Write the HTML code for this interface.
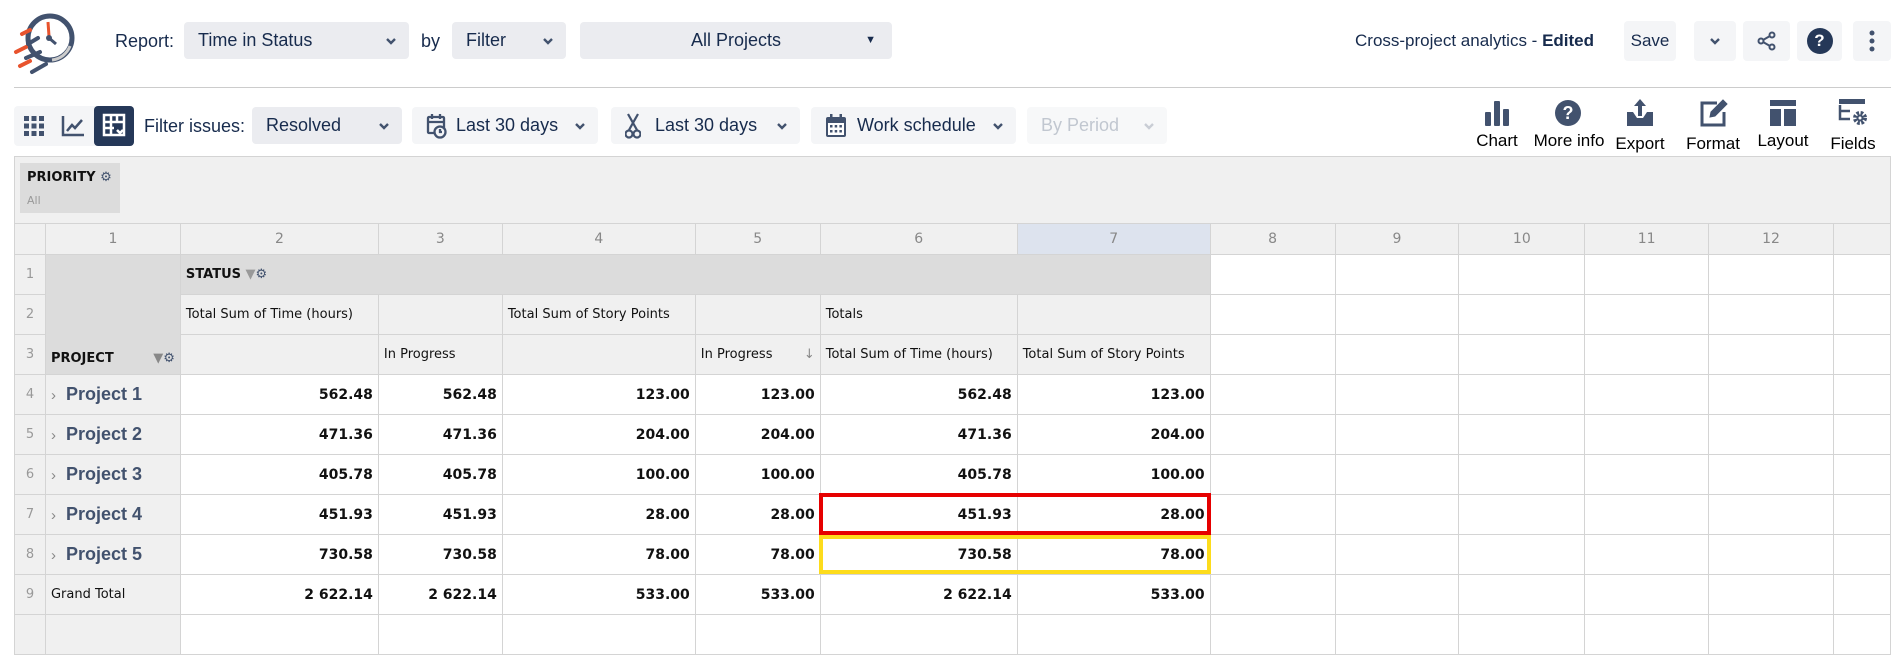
<!DOCTYPE html>
<html><head><meta charset="utf-8"><style>
*{box-sizing:border-box;margin:0;padding:0}
body{width:1891px;height:617px;overflow:hidden;background:#fff;font-family:"Liberation Sans",sans-serif;color:#172b4d;position:relative}
.a{position:absolute}
.sel{position:absolute;background:#ebecf0;border-radius:4px;font-size:18px;display:flex;align-items:center;padding:0 14px;color:#172b4d}
.sel .v{position:absolute;right:12px;top:50%;transform:translateY(-50%);width:12px;height:8px}
.btn{position:absolute;background:#f4f5f7;border-radius:4px;display:flex;align-items:center;justify-content:center}
.ti{position:absolute;text-align:center;font-size:17px;color:#000;width:70px}
table{position:absolute;left:14px;top:223px;border-collapse:collapse;table-layout:fixed;font-family:"DejaVu Sans",sans-serif;font-size:13px;color:#111}
td{border:1px solid #d4d4d4;overflow:hidden;white-space:nowrap;padding:0 5px}
tr.h td{height:31px;background:#f0f0f0;color:#888;text-align:center;font-size:14px}
tr.r td{height:40px}
td.n{background:#f0f0f0;color:#999;text-align:center;padding:0}
td.num{text-align:right;font-weight:bold;font-size:14px}
td.p{background:#f0f0f0;font-family:"Liberation Sans",sans-serif;font-weight:bold;font-size:18px;color:#42526e}
td.p span{color:#888;font-weight:normal;font-size:15px;margin:0 10px 0 0}
td.g{background:#f0f0f0}
td.dg{background:#dcdcdc}
</style></head><body>
<svg width="0" height="0" style="position:absolute"><defs><symbol id="cv" viewBox="0 0 12 8"><path d="M2 2L6 6L10 2" fill="none" stroke="#42526e" stroke-width="2.4"/></symbol></defs></svg>
<!-- logo -->
<svg class="a" style="left:8px;top:8px" width="70" height="70" viewBox="0 0 70 70">
<circle cx="42" cy="30" r="22" fill="none" stroke="#42526e" stroke-width="5"/>
<path d="M44 52 A22 22 0 0 0 62 38" stroke="#ccc" stroke-width="3" fill="none"/>
<line x1="40" y1="14" x2="41" y2="28" stroke="#e8532d" stroke-width="3"/>
<line x1="41" y1="30" x2="48" y2="36" stroke="#42526e" stroke-width="3"/>
<circle cx="41" cy="30" r="3" fill="#42526e"/>
<line x1="14" y1="26" x2="22" y2="22" stroke="#e8532d" stroke-width="4" stroke-linecap="round"/>
<line x1="8" y1="44" x2="18" y2="39" stroke="#e8532d" stroke-width="4" stroke-linecap="round"/>
<line x1="12" y1="58" x2="22" y2="53" stroke="#e8532d" stroke-width="4" stroke-linecap="round"/>
<line x1="20" y1="36" x2="30" y2="30" stroke="#42526e" stroke-width="4" stroke-linecap="round"/>
<line x1="18" y1="50" x2="32" y2="44" stroke="#42526e" stroke-width="4" stroke-linecap="round"/>
<line x1="24" y1="64" x2="38" y2="56" stroke="#42526e" stroke-width="4" stroke-linecap="round"/>
</svg>
<div class="a" style="left:115px;top:31px;font-size:18px">Report:</div>
<div class="sel" style="left:184px;top:22px;width:225px;height:37px">Time in Status<svg class="v"><use href="#cv"/></svg></div>
<div class="a" style="left:421px;top:31px;font-size:18px">by</div>
<div class="sel" style="left:452px;top:22px;width:114px;height:37px">Filter<svg class="v"><use href="#cv"/></svg></div>
<div class="sel" style="left:580px;top:22px;width:312px;height:37px;justify-content:center">All Projects<span style="position:absolute;right:16px;font-size:11px;top:12px">&#9660;</span></div>
<div class="a" style="left:1355px;top:31px;font-size:17px">Cross-project analytics - <b>Edited</b></div>
<div class="btn" style="left:1624px;top:21px;width:52px;height:40px;font-size:17px">Save</div>
<div class="btn" style="left:1694px;top:21px;width:42px;height:40px"><svg width="12" height="8"><use href="#cv"/></svg></div>
<div class="btn" style="left:1743px;top:21px;width:47px;height:40px"><svg width="20" height="20" viewBox="0 0 20 20"><circle cx="15" cy="4" r="2.5" fill="none" stroke="#42526e" stroke-width="2"/><circle cx="4" cy="10" r="2.5" fill="none" stroke="#42526e" stroke-width="2"/><circle cx="15" cy="16" r="2.5" fill="none" stroke="#42526e" stroke-width="2"/><path d="M6 9L13 5M6 11L13 15" stroke="#42526e" stroke-width="2"/></svg></div>
<div class="btn" style="left:1797px;top:21px;width:45px;height:40px"><div style="width:26px;height:26px;border-radius:50%;background:#253858;color:#fff;font-weight:bold;font-size:17px;text-align:center;line-height:26px">?</div></div>
<div class="btn" style="left:1853px;top:21px;width:38px;height:40px"><svg width="6" height="22" viewBox="0 0 6 22" fill="#42526e"><circle cx="3" cy="3" r="2.5"/><circle cx="3" cy="11" r="2.5"/><circle cx="3" cy="19" r="2.5"/></svg></div>
<div class="a" style="left:14px;top:87px;width:1877px;height:1px;background:#ccc"></div>
<!-- toolbar -->
<div class="a" style="left:14px;top:106px;width:120px;height:40px;background:#f4f5f7;border-radius:4px"></div>
<svg class="a" style="left:23px;top:115px" width="22" height="22" viewBox="0 0 22 22" fill="#42526e"><rect x="1" y="1" width="5" height="5"/><rect x="8.5" y="1" width="5" height="5"/><rect x="16" y="1" width="5" height="5"/><rect x="1" y="8.5" width="5" height="5"/><rect x="8.5" y="8.5" width="5" height="5"/><rect x="16" y="8.5" width="5" height="5"/><rect x="1" y="16" width="5" height="5"/><rect x="8.5" y="16" width="5" height="5"/><rect x="16" y="16" width="5" height="5"/></svg>
<svg class="a" style="left:61px;top:115px" width="24" height="22" viewBox="0 0 24 22" fill="none" stroke="#42526e" stroke-width="2.5"><path d="M2 1V20H23"/><path d="M6 16L11 10L14 13L21 5"/></svg>
<div class="a" style="left:94px;top:106px;width:40px;height:40px;background:#253858;border-radius:4px"></div>
<svg class="a" style="left:102px;top:113px" width="24" height="26" viewBox="0 0 24 26" fill="none" stroke="#fff" stroke-width="2.5"><rect x="2" y="2" width="20" height="20"/><path d="M2 9H22M2 15H12M9 2V22M15 2V9"/><path d="M15 17L18 20L21 17" /></svg>
<div class="a" style="left:144px;top:116px;font-size:18px">Filter issues:</div>
<div class="sel" style="left:252px;top:107px;width:150px;height:37px">Resolved<svg class="v"><use href="#cv"/></svg></div>
<div class="sel" style="left:412px;top:107px;width:186px;height:37px;background:#f4f5f7"><svg width="22" height="26" viewBox="0 0 22 26" fill="none" stroke="#42526e" stroke-width="2.3" style="margin-right:8px"><rect x="2" y="4" width="16" height="16" rx="1"/><path d="M6 1V6M14 1V6M2 9H18"/><circle cx="14" cy="19" r="5.5" fill="#f4f5f7"/><path d="M14 16V19H16"/></svg>Last 30 days<svg class="v"><use href="#cv"/></svg></div>
<div class="sel" style="left:611px;top:107px;width:189px;height:37px;background:#f4f5f7"><svg width="16" height="26" viewBox="0 0 16 26" fill="none" stroke="#42526e" stroke-width="2.2" style="margin-right:14px"><path d="M3 1L12 17M13 1L4 17"/><circle cx="4" cy="21" r="3.5"/><circle cx="12" cy="21" r="3.5"/></svg>Last 30 days<svg class="v"><use href="#cv"/></svg></div>
<div class="sel" style="left:811px;top:107px;width:205px;height:37px;background:#f4f5f7"><svg width="22" height="24" viewBox="0 0 22 24" style="margin-right:10px"><rect x="1" y="3" width="20" height="20" rx="2" fill="#42526e"/><rect x="3" y="9" width="16" height="12" fill="#fff"/><g fill="#42526e"><rect x="5" y="11" width="2.5" height="2.5"/><rect x="9.7" y="11" width="2.5" height="2.5"/><rect x="14.4" y="11" width="2.5" height="2.5"/><rect x="5" y="16" width="2.5" height="2.5"/><rect x="9.7" y="16" width="2.5" height="2.5"/><rect x="14.4" y="16" width="2.5" height="2.5"/></g><rect x="5" y="0" width="2.5" height="5" fill="#42526e"/><rect x="14.5" y="0" width="2.5" height="5" fill="#42526e"/></svg>Work schedule<svg class="v"><use href="#cv"/></svg></div>
<div class="sel" style="left:1027px;top:107px;width:140px;height:37px;background:#f7f8f9;color:#c1c7d0">By Period<svg class="v" style="opacity:.25"><use href="#cv"/></svg></div>
<!-- right icons -->
<svg class="a" style="left:1483px;top:99px" width="28" height="28" viewBox="0 0 28 28" fill="#42526e"><rect x="2" y="13" width="6" height="14" rx="1"/><rect x="11" y="2" width="6" height="25" rx="1"/><rect x="20" y="10" width="6" height="17" rx="1"/></svg>
<div class="ti" style="left:1462px;top:131px">Chart</div>
<svg class="a" style="left:1554px;top:99px" width="28" height="28" viewBox="0 0 28 28"><circle cx="14" cy="14" r="13" fill="#42526e"/><text x="14" y="20" text-anchor="middle" fill="#fff" font-size="18" font-weight="bold" font-family="Liberation Sans">?</text></svg>
<div class="ti" style="left:1530px;top:131px;width:78px">More info</div>
<svg class="a" style="left:1625px;top:98px" width="30" height="30" viewBox="0 0 30 30" fill="#42526e"><path d="M15 1L9 8H13V18H17V8H21Z"/><path d="M2 14H8L12 20H18L22 14H28V28H2Z"/></svg>
<div class="ti" style="left:1605px;top:134px">Export</div>
<svg class="a" style="left:1699px;top:98px" width="30" height="30" viewBox="0 0 30 30" fill="none" stroke="#42526e" stroke-width="3"><path d="M18 5H3V27H25V14"/><path d="M24 2L28 6L16 18L11 19L12 14Z" fill="#42526e" stroke-width="1"/></svg>
<div class="ti" style="left:1678px;top:134px">Format</div>
<svg class="a" style="left:1769px;top:99px" width="28" height="28" viewBox="0 0 28 28" fill="#42526e"><rect x="1" y="1" width="26" height="6"/><rect x="1" y="10" width="11" height="17"/><rect x="15" y="10" width="12" height="17"/></svg>
<div class="ti" style="left:1748px;top:131px">Layout</div>
<svg class="a" style="left:1838px;top:97px" width="30" height="30" viewBox="0 0 30 30"><rect x="1" y="2" width="26" height="5" fill="#42526e"/><path d="M2 8V22H12M2 14H12" fill="none" stroke="#42526e" stroke-width="2.5"/><circle cx="22" cy="21" r="5" fill="none" stroke="#42526e" stroke-width="4" stroke-dasharray="2.5 1.5"/><circle cx="22" cy="21" r="3.5" fill="#42526e"/><circle cx="22" cy="21" r="1.5" fill="#fff"/></svg>
<div class="ti" style="left:1818px;top:134px">Fields</div>
<!-- priority area -->
<div class="a" style="left:14px;top:156px;width:1877px;height:68px;background:#f0f0f0;border:1px solid #d4d4d4"></div>
<div class="a" style="left:20px;top:163px;width:100px;height:50px;background:#dcdcdc"></div>
<div class="a" style="left:27px;top:170px;font-family:'DejaVu Sans',sans-serif;font-weight:bold;font-size:13px;color:#111">PRIORITY <span style="color:#42526e">&#9881;</span></div>
<div class="a" style="left:27px;top:194px;font-family:'DejaVu Sans',sans-serif;font-size:11px;color:#999">All</div>
<table>
<colgroup><col style="width:31px"><col style="width:135px"><col style="width:198px"><col style="width:124px"><col style="width:193px"><col style="width:125px"><col style="width:197px"><col style="width:193px"><col style="width:125px"><col style="width:124px"><col style="width:126px"><col style="width:124px"><col style="width:125px"><col style="width:57px"></colgroup>
<tr class="h"><td></td><td>1</td><td>2</td><td>3</td><td>4</td><td>5</td><td>6</td><td style="background:#dde3ee">7</td><td>8</td><td>9</td><td>10</td><td>11</td><td>12</td><td></td></tr>
<tr class="r"><td class="n" style="height:39px">1</td><td class="dg" rowspan="3" style="vertical-align:bottom;padding-bottom:8px;font-weight:bold;font-size:13px">PROJECT<span style="float:right;color:#888">&#9660;<span style="color:#42526e">&#9881;</span></span></td><td class="dg" colspan="6" style="font-weight:bold;height:39px">STATUS <span style="color:#999">&#9660;</span><span style="color:#42526e">&#9881;</span></td><td></td><td></td><td></td><td></td><td></td><td></td></tr>
<tr class="r"><td class="n">2</td><td class="g">Total Sum of Time (hours)</td><td class="g"></td><td class="g">Total Sum of Story Points</td><td class="g"></td><td class="g">Totals</td><td class="g"></td><td></td><td></td><td></td><td></td><td></td><td></td></tr>
<tr class="r"><td class="n">3</td><td class="g"></td><td class="g">In Progress</td><td class="g"></td><td class="g">In Progress<span style="float:right;color:#888">&#8595;</span></td><td class="g">Total Sum of Time (hours)</td><td class="g">Total Sum of Story Points</td><td></td><td></td><td></td><td></td><td></td><td></td></tr>
<tr class="r"><td class="n">4</td><td class="p"><span>&#8250;</span>Project 1</td><td class="num">562.48</td><td class="num">562.48</td><td class="num">123.00</td><td class="num">123.00</td><td class="num">562.48</td><td class="num">123.00</td><td></td><td></td><td></td><td></td><td></td><td></td></tr>
<tr class="r"><td class="n">5</td><td class="p"><span>&#8250;</span>Project 2</td><td class="num">471.36</td><td class="num">471.36</td><td class="num">204.00</td><td class="num">204.00</td><td class="num">471.36</td><td class="num">204.00</td><td></td><td></td><td></td><td></td><td></td><td></td></tr>
<tr class="r"><td class="n">6</td><td class="p"><span>&#8250;</span>Project 3</td><td class="num">405.78</td><td class="num">405.78</td><td class="num">100.00</td><td class="num">100.00</td><td class="num">405.78</td><td class="num">100.00</td><td></td><td></td><td></td><td></td><td></td><td></td></tr>
<tr class="r"><td class="n">7</td><td class="p"><span>&#8250;</span>Project 4</td><td class="num">451.93</td><td class="num">451.93</td><td class="num">28.00</td><td class="num">28.00</td><td class="num">451.93</td><td class="num">28.00</td><td></td><td></td><td></td><td></td><td></td><td></td></tr>
<tr class="r"><td class="n">8</td><td class="p"><span>&#8250;</span>Project 5</td><td class="num">730.58</td><td class="num">730.58</td><td class="num">78.00</td><td class="num">78.00</td><td class="num">730.58</td><td class="num">78.00</td><td></td><td></td><td></td><td></td><td></td><td></td></tr>
<tr class="r"><td class="n">9</td><td class="g" style="font-size:13px">Grand Total</td><td class="num">2 622.14</td><td class="num">2 622.14</td><td class="num">533.00</td><td class="num">533.00</td><td class="num">2 622.14</td><td class="num">533.00</td><td></td><td></td><td></td><td></td><td></td><td></td></tr>
<tr class="r"><td class="n"></td><td class="g"></td><td></td><td></td><td></td><td></td><td></td><td></td><td></td><td></td><td></td><td></td><td></td><td></td></tr>
</table>
<div class="a" style="left:819px;top:493px;width:392px;height:42px;border:4px solid #e60000"></div>
<div class="a" style="left:819px;top:535px;width:392px;height:39px;border:4px solid #fddc1c"></div>
</body></html>
